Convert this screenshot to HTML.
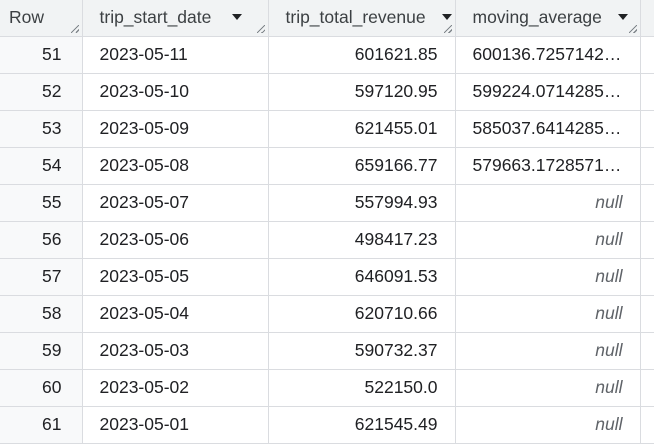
<!DOCTYPE html><html><head><style>
body{margin:0;width:654px;height:446px;overflow:hidden;background:#fff;font-family:"Liberation Sans",sans-serif;font-size:17.5px;color:#202124}
table{border-collapse:collapse;table-layout:fixed;position:absolute;left:0;top:0;width:654px}
td,th{height:36px;padding:0 17px;border-right:1px solid #dadce0;border-bottom:1px solid #dadce0;white-space:nowrap;overflow:hidden;box-sizing:border-box;position:relative}
th{background:#f1f3f4;font-weight:normal;text-align:left;color:#3c4043;height:36px}
tr.r td{height:37px}
td.n{background:#f8f9fa;text-align:right;padding-right:20px}
.rt{text-align:right}
.nl{text-align:right;font-style:italic;color:#5f6368}
.arr{position:absolute;right:26px;top:14px;width:0;height:0;border-left:5px solid transparent;border-right:5px solid transparent;border-top:6px solid #202124}
.g{position:absolute;right:3px;bottom:3px;width:8px;height:8px;background:linear-gradient(135deg,transparent 45%,#80868b 45%,#80868b 55%,transparent 55%,transparent 75%,#80868b 75%,#80868b 85%,transparent 85%)}
</style></head><body>
<table>
<colgroup><col style="width:82px"><col style="width:186px"><col style="width:187px"><col style="width:185px"><col style="width:14px"></colgroup>
<tr><th style="padding-left:9px">Row<span class="g"></span></th><th>trip_start_date<span class="arr"></span><span class="g"></span></th><th style="padding-left:17px">trip_total_revenue<span class="arr" style="right:3px"></span><span class="g"></span></th><th>moving_average<span class="arr" style="right:12px"></span><span class="g"></span></th><th style="border-right:none"></th></tr>
<tr class="r"><td class="n">51</td><td>2023-05-11</td><td class="rt">601621.85</td><td>600136.7257142…</td><td style="border-right:none"></td></tr>
<tr class="r"><td class="n">52</td><td>2023-05-10</td><td class="rt">597120.95</td><td>599224.0714285…</td><td style="border-right:none"></td></tr>
<tr class="r"><td class="n">53</td><td>2023-05-09</td><td class="rt">621455.01</td><td>585037.6414285…</td><td style="border-right:none"></td></tr>
<tr class="r"><td class="n">54</td><td>2023-05-08</td><td class="rt">659166.77</td><td>579663.1728571…</td><td style="border-right:none"></td></tr>
<tr class="r"><td class="n">55</td><td>2023-05-07</td><td class="rt">557994.93</td><td class="nl">null</td><td style="border-right:none"></td></tr>
<tr class="r"><td class="n">56</td><td>2023-05-06</td><td class="rt">498417.23</td><td class="nl">null</td><td style="border-right:none"></td></tr>
<tr class="r"><td class="n">57</td><td>2023-05-05</td><td class="rt">646091.53</td><td class="nl">null</td><td style="border-right:none"></td></tr>
<tr class="r"><td class="n">58</td><td>2023-05-04</td><td class="rt">620710.66</td><td class="nl">null</td><td style="border-right:none"></td></tr>
<tr class="r"><td class="n">59</td><td>2023-05-03</td><td class="rt">590732.37</td><td class="nl">null</td><td style="border-right:none"></td></tr>
<tr class="r"><td class="n">60</td><td>2023-05-02</td><td class="rt">522150.0</td><td class="nl">null</td><td style="border-right:none"></td></tr>
<tr class="r"><td class="n">61</td><td>2023-05-01</td><td class="rt">621545.49</td><td class="nl">null</td><td style="border-right:none"></td></tr>
</table>
</body></html>
